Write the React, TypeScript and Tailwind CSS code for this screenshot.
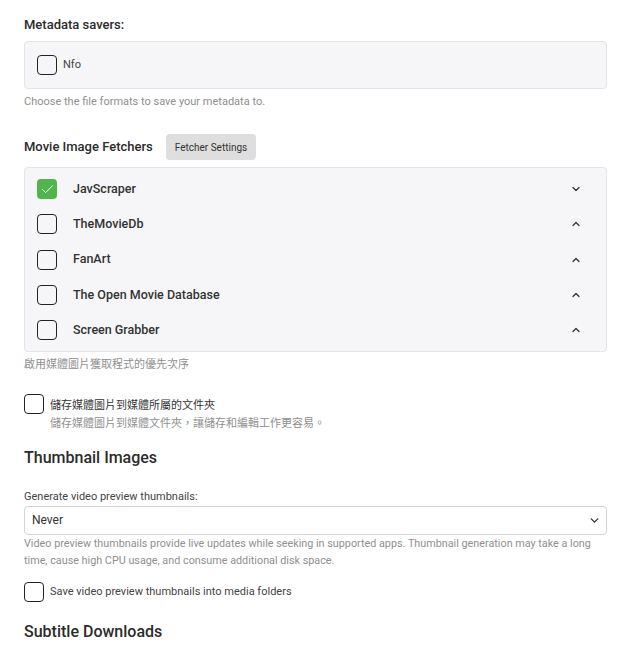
import React from 'react';
import { ChevronDown, ChevronUp, Check } from 'lucide-react';

const font = { fontFamily: 'Roboto, "Noto Sans CJK TC", sans-serif' };

const fetchers = [
  { name: 'JavScraper', checked: true, open: true },
  { name: 'TheMovieDb', checked: false, open: false },
  { name: 'FanArt', checked: false, open: false },
  { name: 'The Open Movie Database', checked: false, open: false },
  { name: 'Screen Grabber', checked: false, open: false },
];

function Box({ checked = false }: { checked?: boolean }) {
  if (checked) {
    return (
      <span className="w-5 h-5 shrink-0 rounded-[4px] bg-[#4fb54c] flex items-center justify-center">
        <Check size={15} strokeWidth={1.5} className="text-white" />
      </span>
    );
  }
  return <span className="w-5 h-5 shrink-0 rounded-[4px] border border-[#222]" />;
}

export default function App() {
  return (
    <div className="min-h-screen bg-white pl-6 pr-[18px] pt-[15px] text-[#333]" style={font}>
      <h3 className="text-[13px] leading-5 font-medium text-[#2b2b2b] mb-[6px]">Metadata savers:</h3>
      <div className="border border-[#e4e4e7] bg-[#f6f6f8] rounded-[4px] px-3 py-[13px]">
        <label className="flex items-center gap-[6px]">
          <Box />
          <span className="text-[11px] text-[#444]">Nfo</span>
        </label>
      </div>
      <p className="mt-[5px] text-[11px] leading-4 text-[#8f8f8f]">Choose the file formats to save your metadata to.</p>

      <div className="mt-[24px] flex items-center gap-[13px]">
        <h3 className="text-[13px] leading-5 font-medium text-[#2b2b2b]">Movie Image Fetchers</h3>
        <button className="h-[26px] px-[9px] rounded-[4px] bg-[#dedede] text-[10px] text-[#333]">Fetcher Settings</button>
      </div>
      <div className="mt-[7px] border border-[#e4e4e7] bg-[#f6f6f8] rounded-[4px] pt-[3.5px] pb-[3px]">
        {fetchers.map((f) => (
          <div key={f.name} className="h-[35.25px] flex items-center pl-3 pr-[24px]">
            <Box checked={f.checked} />
            <span className="ml-4 flex-1 text-[12.5px] font-medium text-[#333]">{f.name}</span>
            {f.open ? (
              <ChevronDown size={12} strokeWidth={2.5} className="text-[#333]" />
            ) : (
              <ChevronUp size={12} strokeWidth={2.5} className="text-[#333]" />
            )}
          </div>
        ))}
      </div>
      <p className="mt-[5px] text-[11px] leading-4 text-[#8f8f8f]">啟用媒體圖片獲取程式的優先次序</p>

      <label className="mt-[21px] flex items-start gap-[6px]">
        <Box />
        <span className="flex flex-col pt-[3px]">
          <span className="text-[11px] leading-[18px] text-[#333]">儲存媒體圖片到媒體所屬的文件夾</span>
          <span className="text-[11px] leading-[18px] text-[#8f8f8f]">儲存媒體圖片到媒體文件夾，讓儲存和編輯工作更容易。</span>
        </span>
      </label>

      <h2 className="mt-[13px] text-[16px] leading-6 font-medium text-[#2b2b2b]">Thumbnail Images</h2>
      <p className="mt-[19px] text-[11px] leading-4 text-[#444]">Generate video preview thumbnails:</p>
      <div className="mt-[1px] h-[29px] border border-[#d4d4d8] rounded-[4px] bg-white flex items-center pl-[7px] pr-[5px]">
        <span className="flex-1 text-[12px] text-[#333]">Never</span>
        <ChevronDown size={13} strokeWidth={2.5} className="text-[#333]" />
      </div>
      <p className="text-[10.8px] leading-[17px] text-[#8f8f8f]">
        Video preview thumbnails provide live updates while seeking in supported apps. Thumbnail generation may take a long time, cause high CPU usage, and consume additional disk space.
      </p>

      <label className="mt-[13px] flex items-center gap-[6px]">
        <Box />
        <span className="text-[11px] text-[#444]">Save video preview thumbnails into media folders</span>
      </label>

      <h2 className="mt-[18px] text-[16px] leading-6 font-medium text-[#2b2b2b]">Subtitle Downloads</h2>
    </div>
  );
}
